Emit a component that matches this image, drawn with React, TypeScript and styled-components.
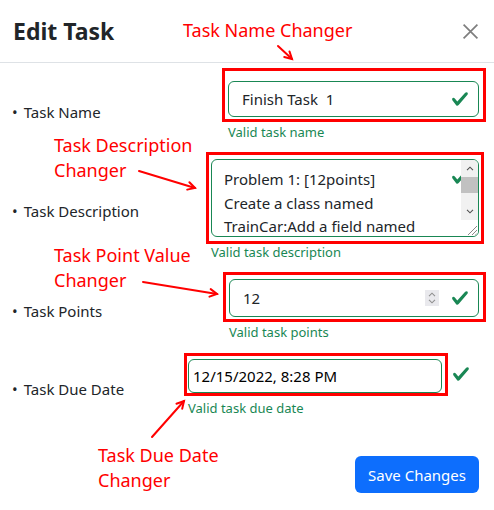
import React from 'react';
import styled, { createGlobalStyle } from 'styled-components';

const GlobalStyle = createGlobalStyle`
  html, body {
    margin: 0;
    padding: 0;
    background: #fff;
  }
  body {
    font-family: "Noto Sans", "Open Sans", sans-serif;
    color: #212529;
  }
`;

const Page = styled.div`
  position: relative;
  width: 494px;
  height: 510px;
  overflow: hidden;
  background: #fff;
`;

const Header = styled.div`
  display: flex;
  align-items: center;
  justify-content: space-between;
  height: 62px;
  padding: 0 15px 0 13px;
  border-bottom: 1px solid #dee2e6;
`;

const Title = styled.h4`
  margin: 0;
  font-size: 23px;
  font-weight: 700;
  line-height: 27px;
  color: #212529;
`;

const CloseButton = styled.button`
  width: 17px;
  height: 17px;
  padding: 0;
  border: 0;
  background: transparent;
  opacity: 0.5;
  display: flex;
`;

const Body = styled.div`
  padding: 18px 15px 0 12px;
`;

const FieldList = styled.ul`
  margin: 0;
  padding: 0;
  list-style: none;
  display: flex;
  flex-direction: column;
  gap: 17px;
`;

const FieldRow = styled.li`
  display: flex;
  align-items: center;
  justify-content: space-between;
`;

const Label = styled.span`
  font-size: 15px;
  line-height: 22px;
  color: #212529;
  &::before {
    content: '•';
    margin-right: 6px;
  }
`;

const FieldCol = styled.div<{ $width: number }>`
  width: ${p => p.$width}px;
  display: flex;
  flex-direction: column;
`;

const ControlLine = styled.div`
  display: flex;
  align-items: center;
  gap: 10px;
`;

// red annotation frame drawn around a control
const Framed = styled.div<{ $frame: string }>`
  position: relative;
  flex: 1;
  display: flex;
  &::after {
    content: '';
    position: absolute;
    inset: ${p => p.$frame};
    border: 3px solid #ff0000;
    pointer-events: none;
  }
`;

const TextInput = styled.input<{ $height: number; $padLeft?: number; $ink?: string }>`
  box-sizing: border-box;
  width: 100%;
  height: ${p => p.$height}px;
  padding: 0 40px 0 ${p => p.$padLeft ?? 13}px;
  border: 1px solid #198754;
  border-radius: 6px;
  font-family: "Noto Sans", "Open Sans", sans-serif;
  font-size: 15px;
  color: ${p => p.$ink ?? '#212529'};
  background: #fff;
  outline: none;
  -moz-appearance: textfield;
  &::-webkit-inner-spin-button,
  &::-webkit-outer-spin-button {
    -webkit-appearance: none;
    margin: 0;
  }
`;

const TextArea = styled.textarea`
  box-sizing: border-box;
  width: 100%;
  height: 78px;
  padding: 8px 40px 0 12px;
  border: 1px solid #198754;
  border-radius: 6px;
  font-family: "Noto Sans", "Open Sans", sans-serif;
  font-size: 15px;
  line-height: 23.5px;
  color: #212529;
  resize: none;
  overflow: hidden;
  outline: none;
`;

const ValidMark = styled.svg<{ $top?: number }>`
  position: absolute;
  right: 10px;
  top: ${p => (p.$top !== undefined ? `${p.$top}px` : '50%')};
  transform: ${p => (p.$top !== undefined ? 'none' : 'translateY(-50%)')};
  width: 18px;
  height: 18px;
`;

const OuterMark = styled.svg`
  flex: none;
  width: 18px;
  height: 18px;
  margin-right: 9px;
  margin-top: -4px;
`;

const Feedback = styled.div`
  margin-top: 6px;
  font-size: 13px;
  line-height: 19px;
  color: #198754;
`;

const Spinner = styled.div`
  position: absolute;
  right: 40px;
  top: 50%;
  transform: translateY(-50%);
  width: 14px;
  height: 16px;
  background: #e9e9ed;
  display: flex;
  flex-direction: column;
  align-items: center;
  justify-content: center;
  gap: 2px;
`;

const ScrollBar = styled.div`
  position: absolute;
  top: 1px;
  right: 1px;
  bottom: 1px;
  width: 17px;
  display: flex;
  flex-direction: column;
  border-top-right-radius: 5px;
  border-bottom-right-radius: 5px;
  overflow: hidden;
`;

const ScrollButton = styled.div`
  height: 17px;
  background: #f1f1f1;
  display: flex;
  align-items: center;
  justify-content: center;
`;

const ScrollTrack = styled.div`
  flex: 1;
  background: #f1f1f1;
`;

const ScrollThumb = styled.div`
  height: 16px;
  background: #c1c1c1;
`;

const ScrollCorner = styled.div`
  height: 16px;
  background: #fff;
  display: flex;
  align-items: flex-end;
  justify-content: flex-end;
`;

const Footer = styled.div`
  display: flex;
  justify-content: flex-end;
  padding: 38px 15px 0 0;
`;

const SaveButton = styled.button`
  width: 124px;
  height: 37px;
  border: 0;
  border-radius: 6px;
  background: #0d6efd;
  color: #fff;
  font-family: "Noto Sans", "Open Sans", sans-serif;
  font-size: 15px;
  line-height: 22px;
`;

// screenshot annotations drawn on top of the modal
const Annotations = styled.div`
  position: absolute;
  inset: 0;
  pointer-events: none;
`;

const Note = styled.div<{ $x: number; $y: number }>`
  position: absolute;
  left: ${p => p.$x}px;
  top: ${p => p.$y}px;
  font-size: 18px;
  line-height: 25px;
  color: #ff0000;
  white-space: nowrap;
`;

const ArrowLayer = styled.svg`
  position: absolute;
  inset: 0;
  width: 494px;
  height: 510px;
`;

const Check = () => (
  <path
    fill="#198754"
    d="M2.3 6.73.6 4.53c-.4-1.04.46-1.4 1.1-.8l1.1 1.4 3.4-3.8c.6-.63 1.6-.27 1.2.7l-4 4.6c-.43.5-.8.4-1.1.1z"
  />
);

const Chevron = ({ up, color, w = 8 }: { up?: boolean; color: string; w?: number }) => (
  <svg width={w} height={w / 2 + 1} viewBox="0 0 8 5">
    <path
      d={up ? 'M1 4.2 4 1.2 7 4.2' : 'M1 0.8 4 3.8 7 0.8'}
      fill="none"
      stroke={color}
      strokeWidth="1.1"
    />
  </svg>
);

const arrows: [number, number, number, number][] = [
  [278, 46, 292, 59],
  [139, 171, 195, 188],
  [143, 282, 217, 294],
  [152, 437, 184, 401],
];

export default function App() {
  return (
    <Page>
      <GlobalStyle />
      <Header>
        <Title>Edit Task</Title>
        <CloseButton aria-label="Close">
          <svg width="17" height="17" viewBox="0 0 16 16">
            <path d="M1.5 1.5 14.5 14.5M14.5 1.5 1.5 14.5" stroke="#000" strokeWidth="1.6" />
          </svg>
        </CloseButton>
      </Header>

      <Body>
        <FieldList>
          <FieldRow>
            <Label>Task Name</Label>
            <FieldCol $width={251}>
              <Framed $frame="-13px -7px -5px -6px">
                <TextInput $height={36} defaultValue="Finish Task  1" />
                <ValidMark viewBox="0 0 8 8">
                  <Check />
                </ValidMark>
              </Framed>
              <Feedback>Valid task name</Feedback>
            </FieldCol>
          </FieldRow>

          <FieldRow>
            <Label>Task Description</Label>
            <FieldCol $width={268}>
              <Framed $frame="-7px -5px -7px -5px">
                <TextArea
                  defaultValue={
                    'Problem 1: [12points]\nCreate a class named\nTrainCar:Add a field named\nlength (double)'
                  }
                />
                <ValidMark viewBox="0 0 8 8" $top={9}>
                  <Check />
                </ValidMark>
                <ScrollBar>
                  <ScrollButton>
                    <Chevron up color="#505050" />
                  </ScrollButton>
                  <ScrollTrack>
                    <ScrollThumb />
                  </ScrollTrack>
                  <ScrollButton>
                    <Chevron color="#505050" />
                  </ScrollButton>
                  <ScrollCorner>
                    <svg width="12" height="12" viewBox="0 0 12 12">
                      <path d="M11 2 2 11M11 6 6 11M11 9.5 9.5 11" stroke="#8a8a8a" strokeWidth="1" />
                    </svg>
                  </ScrollCorner>
                </ScrollBar>
              </Framed>
              <Feedback>Valid task description</Feedback>
            </FieldCol>
          </FieldRow>

          <FieldRow>
            <Label>Task Points</Label>
            <FieldCol $width={250}>
              <Framed $frame="-7px -7px -5px -6px">
                <TextInput $height={38} type="number" defaultValue={12} />
                <Spinner>
                  <Chevron up color="#8f8f8f" w={8} />
                  <Chevron color="#8f8f8f" w={8} />
                </Spinner>
                <ValidMark viewBox="0 0 8 8">
                  <Check />
                </ValidMark>
              </Framed>
              <Feedback>Valid task points</Feedback>
            </FieldCol>
          </FieldRow>

          <FieldRow>
            <Label>Task Due Date</Label>
            <FieldCol $width={291}>
              <ControlLine>
                <Framed $frame="-6px -6px -3px -4px">
                  <TextInput $height={34} $padLeft={4} $ink="#000" defaultValue="12/15/2022, 8:28 PM" />
                </Framed>
                <OuterMark viewBox="0 0 8 8">
                  <Check />
                </OuterMark>
              </ControlLine>
              <Feedback>Valid task due date</Feedback>
            </FieldCol>
          </FieldRow>
        </FieldList>
      </Body>

      <Footer>
        <SaveButton>Save Changes</SaveButton>
      </Footer>

      <Annotations>
        <Note $x={183} $y={18}>Task Name Changer</Note>
        <Note $x={54} $y={133}>
          Task Description
          <br />
          Changer
        </Note>
        <Note $x={54} $y={243}>
          Task Point Value
          <br />
          Changer
        </Note>
        <Note $x={98} $y={443}>
          Task Due Date
          <br />
          Changer
        </Note>
        <ArrowLayer viewBox="0 0 494 510">
          {arrows.map(([x1, y1, x2, y2], i) => {
            const a = Math.atan2(y2 - y1, x2 - x1);
            const h = 8;
            const p1 = [x2 - h * Math.cos(a - 0.5), y2 - h * Math.sin(a - 0.5)];
            const p2 = [x2 - h * Math.cos(a + 0.5), y2 - h * Math.sin(a + 0.5)];
            return (
              <g key={i} stroke="#ff0000" strokeWidth="2" fill="none" strokeLinecap="round">
                <line x1={x1} y1={y1} x2={x2} y2={y2} />
                <polyline points={`${p1[0]},${p1[1]} ${x2},${y2} ${p2[0]},${p2[1]}`} />
              </g>
            );
          })}
        </ArrowLayer>
      </Annotations>
    </Page>
  );
}
